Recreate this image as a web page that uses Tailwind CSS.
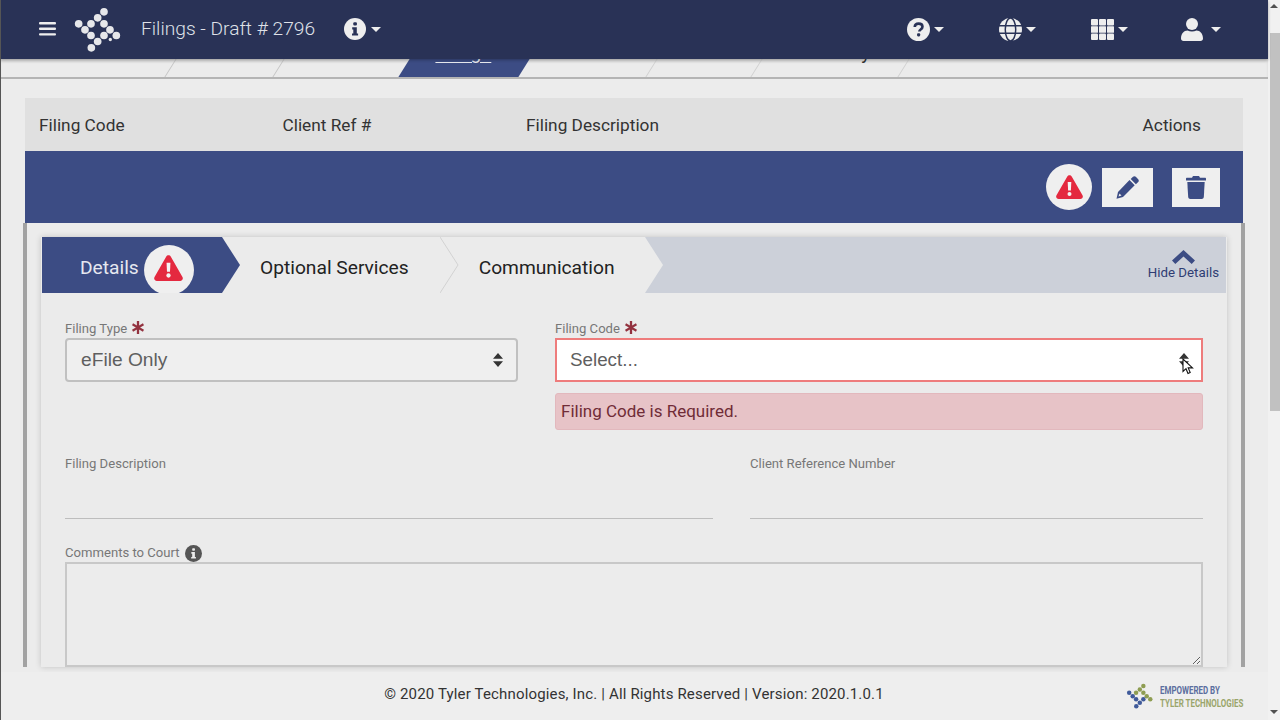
<!DOCTYPE html>
<html lang="en">
<head>
    <meta charset="UTF-8">
    <title>Filings - Draft # 2796</title>
    <script src="https://cdn.jsdelivr.net/npm/@tailwindcss/browser@4"></script>
</head>
<body class="overflow-hidden">
<div class="flex w-[1280px] h-[720px] overflow-hidden relative bg-[#ececec] font-[Roboto,sans-serif]">
    <div class="flex flex-col w-[1268px] h-full">

        <!-- Top bar -->
        <header class="relative z-10 flex items-center shrink-0 h-[59px] bg-[#293256] pl-[39px] pb-[1px] text-[#eeeeee] shadow-[0_1px_3px_rgba(0,0,0,0.3)]">
            <svg class="w-[17px] h-[14px]" viewBox="0 0 17 14" fill="#eeeeee"><rect y="0" width="17" height="2.4" rx="1"/><rect y="5.6" width="17" height="2.4" rx="1"/><rect y="11.2" width="17" height="2.4" rx="1"/></svg>
            <svg class="ml-[17px] w-[50px] h-[47px]" viewBox="220 20 150 140" fill="#e6e7ea">
                <circle cx="313" cy="37" r="11.5"/><circle cx="294" cy="55" r="11.5"/><circle cx="274" cy="73" r="11.5"/><circle cx="237" cy="73" r="11.5"/><circle cx="256" cy="91" r="11.5"/><circle cx="313" cy="73" r="11.5"/><circle cx="331" cy="91" r="11.5"/><circle cx="350" cy="108" r="11.5"/><circle cx="313" cy="108" r="11.5"/><circle cx="294" cy="126" r="11.5"/><circle cx="274" cy="108" r="11.5"/><circle cx="275" cy="145" r="11.5"/><circle cx="332" cy="120" r="5"/>
            </svg>
            <h1 class="ml-[18px] w-[203px] text-[19.2px] font-light text-[#dfe1e8] whitespace-nowrap">Filings - Draft # 2796</h1>
            <svg class="w-[22px] h-[22px]" viewBox="0 0 22 22"><circle cx="11" cy="11" r="11" fill="#eeeeee"/><rect x="9.3" y="4.2" width="3.6" height="3.4" rx="1" fill="#293256"/><path d="M8.2 9.2h4.6v6.2h1.3v2.2H8v-2.2h1.3v-4H8.2z" fill="#293256"/></svg>
            <svg class="ml-[5px] w-[10px] h-[5px]" viewBox="0 0 10 5" fill="#eeeeee"><path d="M0 0h10L5 5z"/></svg>

            <svg class="ml-[526px] w-[23px] h-[23px]" viewBox="0 0 22 22"><circle cx="11" cy="11" r="11" fill="#eeeeee"/><path d="M7.4 8.6c.1-2 1.6-3.2 3.7-3.2 2.2 0 3.7 1.2 3.7 3 0 2.7-3 2.5-3 4.4" fill="none" stroke="#293256" stroke-width="2.5"/><rect x="9.6" y="14.6" width="3" height="3" rx="1" fill="#293256"/></svg>
            <svg class="ml-[4px] w-[10px] h-[5px]" viewBox="0 0 10 5" fill="#eeeeee"><path d="M0 0h10L5 5z"/></svg>

            <svg class="ml-[55px] w-[23px] h-[23px]" viewBox="0 0 22 22"><circle cx="11" cy="11" r="11" fill="#eeeeee"/><g fill="none" stroke="#293256" stroke-width="1.4"><ellipse cx="11" cy="11" rx="5" ry="11"/><path d="M0 7.4h22M0 14.6h22"/></g></svg>
            <svg class="ml-[4px] w-[10px] h-[5px]" viewBox="0 0 10 5" fill="#eeeeee"><path d="M0 0h10L5 5z"/></svg>

            <svg class="ml-[55px] w-[23px] h-[21px]" viewBox="0 0 23 21" fill="#eeeeee">
                <rect width="7" height="6.4" rx="1"/><rect x="8" width="7" height="6.4" rx="1"/><rect x="16" width="7" height="6.4" rx="1"/>
                <rect y="7.3" width="7" height="6.4" rx="0.5"/><rect x="8" y="7.3" width="7" height="6.4" rx="0.5"/><rect x="16" y="7.3" width="7" height="6.4" rx="0.5"/>
                <rect y="14.6" width="7" height="6.4" rx="1"/><rect x="8" y="14.6" width="7" height="6.4" rx="1"/><rect x="16" y="14.6" width="7" height="6.4" rx="1"/>
            </svg>
            <svg class="ml-[4px] w-[10px] h-[5px]" viewBox="0 0 10 5" fill="#eeeeee"><path d="M0 0h10L5 5z"/></svg>

            <svg class="ml-[53px] w-[22px] h-[23px]" viewBox="0 0 22 23" fill="#eeeeee"><circle cx="11" cy="6" r="6"/><path d="M0 20.5c0-5 3-8 6.500-8 1.400.7 2.900 1 4.500 1s3.100-.3 4.500-1c3.500 0 6.500 3 6.500 8 0 1.500-1 2.500-2.500 2.500h-17C1 23 0 22 0 20.500z"/></svg>
            <svg class="ml-[8px] w-[10px] h-[5px]" viewBox="0 0 10 5" fill="#eeeeee"><path d="M0 0h10L5 5z"/></svg>
        </header>

        <!-- Filing steps strip, scrolled mostly under the top bar -->
        <div class="flex shrink-0 h-[20px] overflow-hidden bg-[#ebebeb] border-b-2 border-[#b4b4b4] text-[19.2px] leading-[20px] text-[#333333] shadow-[inset_0_3px_3px_rgba(0,0,0,0.08)]">
            <div class="w-[171px] -skew-x-[32deg] border-r border-[#c4c4c4]"></div>
            <div class="w-[108px] -skew-x-[32deg] border-r border-[#c4c4c4]"></div>
            <div class="w-[125px]"></div>
            <div class="w-[120px] -skew-x-[32deg] bg-[#3c4c84] text-center text-[#e8eaf0]">
                <div class="skew-x-[32deg] -mt-[16px] pr-[20px] underline underline-offset-[3px]">Filings</div>
            </div>
            <div class="w-[128px] -skew-x-[32deg] border-r border-[#d0d0d0]"></div>
            <div class="w-[105px] -skew-x-[32deg] border-r border-[#d0d0d0]"></div>
            <div class="w-[147px] -skew-x-[32deg] border-r border-[#d0d0d0] text-center">
                <div class="skew-x-[32deg] -mt-[16px] pr-[20px]">Summary</div>
            </div>
        </div>

        <main class="flex-1 overflow-hidden pt-[19px] px-[25px]">
            <!-- Filing table head -->
            <div class="grid grid-cols-[243.500px_243.500px_1fr_auto] items-center h-[53px] px-[14px] pt-[2px] bg-[#e0e0e0] text-[17.250px] text-[#333333]">
                <div>Filing Code</div>
                <div>Client Ref #</div>
                <div>Filing Description</div>
                <div class="pr-[28px]">Actions</div>
            </div>

            <!-- Filing row -->
            <div class="flex items-center justify-end h-[72px] bg-[#3c4c84] pr-[23px]">
                <div class="flex items-center justify-center w-[46px] h-[46px] rounded-full bg-[#efefef]">
                    <svg class="w-[27px] h-[24px]" viewBox="0 0 27 24"><path d="M11.300 1.500c1-1.800 3.400-1.800 4.400 0l10.800 18.800c1 1.700-.2 3.700-2.200 3.700H2.700C.7 24-.5 22 .5 20.300z" fill="#e4293f"/><path d="M11.700 7h3.600l-.4 8.600h-2.800z" fill="#f4f4f4"/><circle cx="13.500" cy="19" r="2" fill="#f4f4f4"/></svg>
                </div>
                <div class="flex items-center justify-center ml-[10px] w-[51px] h-[39px] bg-[#efefef]">
                    <svg class="w-[23px] h-[23px]" viewBox="0 0 23 23" fill="#3c4c84"><path d="M17 0.800c.8-.8 2-.8 2.800 0l2.400 2.400c.8.8.8 2 0 2.800l-2.300 2.300-5.200-5.200z"/><path d="M13.500 4l5.200 5.200L7 21l-6.500 1.700L2 16zM3.500 17.500l-1 3 3-.9z"/></svg>
                </div>
                <div class="flex items-center justify-center ml-[19px] w-[48px] h-[39px] bg-[#efefef]">
                    <svg class="w-[20px] h-[23px]" viewBox="0 0 20 23" fill="#3c4c84"><path d="M7 0h6l1 1.700h5c.6 0 1 .4 1 1V4.500H0V2.700c0-.6.4-1 1-1h5z"/><path d="M1.300 6h17.400l-.9 15c-.1 1.200-1 2-2.100 2H4.300c-1.100 0-2-.8-2.100-2z"/></svg>
                </div>
            </div>

            <!-- Expanded filing details -->
            <div class="-mx-[2px] border-x-4 border-[#a2a2a2] px-[14px] pt-[14px] bg-[#ececec]">
                <div class="shadow-[0_0_6px_rgba(0,0,0,0.18)] bg-[#ebebeb] px-[1px]">
                    <div class="relative flex items-center h-[56px] bg-[#ccd0d9] text-[19.200px] text-[#222222]">
                        <div class="absolute inset-y-0 left-0 w-[621px] bg-[#ebebeb] [clip-path:polygon(0_0,603px_0,621px_50%,603px_100%,0_100%)]"></div>
                        <svg class="absolute inset-y-0 left-[398px] w-[19px] h-[56px]" viewBox="0 0 19 56" fill="none" stroke="#d2d2d2"><path d="M0 0l18 28L0 56"/></svg>
                        <div class="relative flex items-center self-stretch w-[198px] pl-[38px] pt-[6px] bg-[#3c4c84] text-[#e6e8f0] overflow-hidden [clip-path:polygon(0_0,180px_0,198px_50%,180px_100%,0_100%)]">
                            <span>Details</span>
                            <div class="flex items-center justify-center ml-[5px] mt-[3px] w-[50px] h-[50px] shrink-0 rounded-full bg-[#efefef]">
                                <svg class="w-[29px] h-[26px] -mt-[3px]" viewBox="0 0 27 24"><path d="M11.300 1.500c1-1.800 3.400-1.800 4.400 0l10.800 18.800c1 1.700-.2 3.700-2.200 3.700H2.700C.7 24-.5 22 .5 20.300z" fill="#e4293f"/><path d="M11.700 7h3.600l-.4 8.600h-2.800z" fill="#f4f4f4"/><circle cx="13.500" cy="19" r="2" fill="#f4f4f4"/></svg>
                            </div>
                        </div>
                        <span class="relative ml-[20px] mt-[6px]">Optional Services</span>
                        <span class="relative ml-[70px] mt-[6px]">Communication</span>
                        <div class="relative flex flex-col items-center ml-auto mr-[7px] text-[13.300px] leading-[16px] text-[#2f3d73]">
                            <svg class="w-[23px] h-[14px]" viewBox="0 0 23 14" fill="#3c4c84"><path d="M11.500 0L23 10.500 19.700 14l-8.200-7.500L3.300 14 0 10.500z"/></svg>
                            <span class="mt-[1px]">Hide Details</span>
                        </div>
                    </div>

                    <form class="px-[23px] pt-[27px] text-[13.100px] leading-[18px] text-[#777777]">
                        <div class="flex gap-[37px]">
                            <div class="w-[453px]">
                                <label class="flex items-center gap-[5px]">Filing Type
                                    <svg class="w-[12px] h-[13px] -mt-[3px]" viewBox="0 0 12 13" stroke="#93323f" stroke-width="2.300" fill="none"><path d="M6 0v13M.5 3.300l11 6.400M11.500 3.300l-11 6.400"/></svg>
                                </label>
                                <div class="flex items-center justify-between h-[44px] pl-[14px] pr-[13px] bg-[#efefef] border-2 border-[#c0c0c0] rounded-[4px] font-['Liberation_Sans',sans-serif] text-[19.200px] text-[#5f5f5f]">
                                    <span>eFile Only</span>
                                    <svg class="w-[10px] h-[14px]" viewBox="0 0 10 14" fill="#333333"><path d="M5 0l5 5.700H0zM5 14L0 8.300h10z"/></svg>
                                </div>
                            </div>
                            <div class="flex-1">
                                <label class="flex items-center gap-[5px]">Filing Code
                                    <svg class="w-[12px] h-[13px] -mt-[3px]" viewBox="0 0 12 13" stroke="#93323f" stroke-width="2.300" fill="none"><path d="M6 0v13M.5 3.300l11 6.400M11.500 3.300l-11 6.400"/></svg>
                                </label>
                                <div class="flex items-center justify-between h-[44px] pl-[13px] pr-[12px] bg-white border-2 border-[#ee7c7c] font-['Liberation_Sans',sans-serif] text-[18.800px] text-[#5f5f5f]">
                                    <span>Select...</span>
                                    <svg class="w-[10px] h-[14px]" viewBox="0 0 10 14" fill="#333333"><path d="M5 0l5 5.700H0zM5 14L0 8.300h10z"/></svg>
                                </div>
                                <div class="flex items-center mt-[11px] h-[37px] px-[5px] pb-[2px] bg-[#e7c3c7] border border-[#e2b8bd] rounded-[3px] text-[17px] text-[#702c37]">Filing Code is Required.</div>
                            </div>
                        </div>

                        <div class="flex gap-[37px] mt-[25px]">
                            <div class="w-[648px]">
                                <label class="block">Filing Description</label>
                                <div class="h-[46px] border-b border-[#bdbdbd]"></div>
                            </div>
                            <div class="flex-1">
                                <label class="block">Client Reference Number</label>
                                <div class="h-[46px] border-b border-[#bdbdbd]"></div>
                            </div>
                        </div>

                        <label class="flex items-center gap-[5px] mt-[25px]">Comments to Court
                            <svg class="w-[17px] h-[17px]" viewBox="0 0 22 22"><circle cx="11" cy="11" r="11" fill="#555555"/><rect x="9.300" y="4.200" width="3.600" height="3.400" rx="1" fill="#ececec"/><path d="M8.200 9.200h4.600v6.200h1.300v2.200H8v-2.200h1.300v-4H8.200z" fill="#ececec"/></svg>
                        </label>
                        <textarea class="block w-full h-[105px] bg-[#ececec] border-2 border-[#c8c8c8]"></textarea>
                    </form>
                </div>
            </div>
        </main>

        <footer class="relative grid grid-cols-[1fr_auto_1fr] items-center shrink-0 h-[48px] bg-[#eeeeee] text-[15px] text-[#333333]">
            <div></div>
            <div class="tracking-[0.16px] mb-[4px]">© 2020 Tyler Technologies, Inc. | All Rights Reserved | Version: 2020.1.0.1</div>
            <div class="flex items-center justify-end pr-[25px]">
                <svg class="w-[28px] h-[28px]" viewBox="220 20 150 140">
                    <g fill="#8e9d52"><circle cx="313" cy="37" r="12"/><circle cx="294" cy="55" r="12"/><circle cx="274" cy="73" r="12"/><circle cx="313" cy="73" r="12"/><circle cx="331" cy="91" r="12"/><circle cx="350" cy="108" r="12"/></g>
                    <g fill="#3f5a9a"><circle cx="237" cy="73" r="12"/><circle cx="256" cy="91" r="12"/><circle cx="313" cy="108" r="12"/><circle cx="294" cy="126" r="12"/><circle cx="274" cy="108" r="12"/><circle cx="275" cy="145" r="12"/></g>
                </svg>
                <div class="ml-[6px] mt-[2px] w-[83px] text-[11.500px] leading-[13px] font-bold whitespace-nowrap origin-left scale-x-[0.69]">
                    <div class="text-[#5c6f9f]">EMPOWERED BY</div>
                    <div class="text-[#9aa56b]">TYLER TECHNOLOGIES</div>
                </div>
            </div>
        </footer>
    </div>

    <!-- Browser scrollbar -->
    <div class="flex flex-col items-end w-[12px] h-full bg-[#f1f1f1]">
        <svg class="self-center mt-[4px] w-[8px] h-[4px]" viewBox="0 0 8 4" fill="#505050"><path d="M4 0l4 4H0z"/></svg>
        <div class="mt-[25px] w-[10px] h-[378px] bg-[#c1c1c1]"></div>
        <svg class="self-center mt-auto mb-[6px] w-[8px] h-[4px]" viewBox="0 0 8 4" fill="#505050"><path d="M4 4L0 0h8z"/></svg>
    </div>

    <!-- Window edge -->
    <div class="absolute z-20 inset-y-0 left-0 w-px bg-[#555555]"></div>

    <!-- Mouse pointer -->
    <svg class="absolute z-20 left-[1182px] top-[358px] w-[12px] h-[17px]" viewBox="0 0 12 17"><path d="M1 1v12.500l3-2.800 2 4.800 2.200-1-2-4.600h4.300z" fill="#ffffff" stroke="#111111" stroke-width="1.100"/></svg>
</div>
</body>
</html>
